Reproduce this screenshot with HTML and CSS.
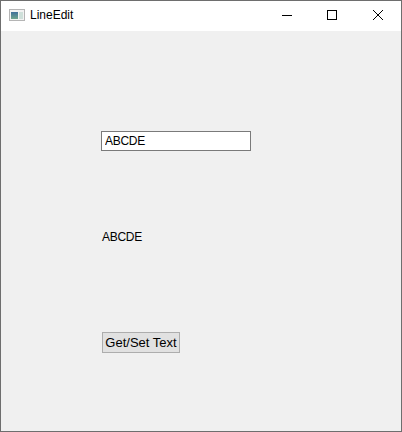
FILE: index.html
```html
<!DOCTYPE html>
<html lang="en">
<head>
    <meta charset="UTF-8">
    <meta name="viewport" content="width=device-width, initial-scale=1.0">
    <title>LineEdit</title>
    <link rel="stylesheet" href="styles.css">
</head>
<body>
    <div class="window">
        <div class="titlebar">
            <svg class="app-icon" width="16" height="16" viewBox="0 0 16 16">
                <defs>
                    <linearGradient id="pane" x1="0" y1="0" x2="0" y2="1">
                        <stop offset="0" stop-color="#3f6f9a"/>
                        <stop offset="1" stop-color="#6fa58c"/>
                    </linearGradient>
                </defs>
                <rect x="0.5" y="2.5" width="15" height="11" fill="#f2f2f2" stroke="#b5b5b5"/>
                <rect x="2" y="5" width="7" height="7" fill="url(#pane)"/>
                <rect x="10" y="5" width="4" height="7" fill="#cfe0da"/>
            </svg>
            <span class="title">LineEdit</span>
            <div class="controls">
                <button class="ctl" aria-label="Minimize">
                    <svg width="12" height="12" viewBox="0 0 12 12"><path d="M2 6.5h10" stroke="#000" fill="none"/></svg>
                </button>
                <button class="ctl" aria-label="Maximize">
                    <svg width="12" height="12" viewBox="0 0 12 12"><rect x="1.5" y="1.5" width="9" height="9" stroke="#000" fill="none"/></svg>
                </button>
                <button class="ctl" aria-label="Close">
                    <svg width="12" height="12" viewBox="0 0 12 12"><path d="M1 1l10 10M11 1L1 11" stroke="#000" fill="none"/></svg>
                </button>
            </div>
        </div>
        <div class="content">
            <input class="line-edit" type="text" value="ABCDE">
            <div class="label">ABCDE</div>
            <button class="push-btn">Get/Set Text</button>
        </div>
    </div>
</body>
</html>
```
FILE: styles.css
```css
html, body {
    margin: 0;
    padding: 0;
}

body {
    font-family: "Liberation Sans", Arial, sans-serif;
    font-size: 12px;
    color: #000;
    background: #f0f0f0;
}

.window {
    width: 402px;
    height: 432px;
    box-sizing: border-box;
    border: 1px solid #6e6e6e;
    display: flex;
    flex-direction: column;
    overflow: hidden;
}

.titlebar {
    height: 30px;
    box-sizing: border-box;
    flex: none;
    display: flex;
    align-items: center;
    background: #fff;
    padding: 0 0 2px 8px;
}

.app-icon {
    flex: none;
}

.title {
    margin-left: 5px;
    font-size: 12px;
}

.controls {
    margin-left: auto;
    display: flex;
    height: 100%;
}

.ctl {
    width: 46px;
    height: 100%;
    padding: 0;
    border: none;
    background: none;
    display: flex;
    align-items: center;
    justify-content: center;
}

.content {
    flex: 1;
    display: flex;
    flex-direction: column;
    align-items: flex-start;
    padding: 100px 0 0 100px;
    background: #f0f0f0;
}

.line-edit {
    width: 150px;
    height: 20px;
    box-sizing: border-box;
    border: 1px solid #7a7a7a;
    border-radius: 0;
    padding: 0 3px;
    outline: none;
    background: #fff;
    font: 12px "Liberation Sans", Arial, sans-serif;
    letter-spacing: -0.3px;
}

.label {
    margin: 79px 0 0 1px;
    line-height: 14px;
    letter-spacing: -0.3px;
}

.push-btn {
    margin: 88px 0 0 1px;
    width: 78px;
    height: 21px;
    box-sizing: border-box;
    border: 1px solid #adadad;
    border-radius: 0;
    padding: 0;
    background: #e1e1e1;
    font: 13px "Liberation Sans", Arial, sans-serif;
    color: #000;
}
```
